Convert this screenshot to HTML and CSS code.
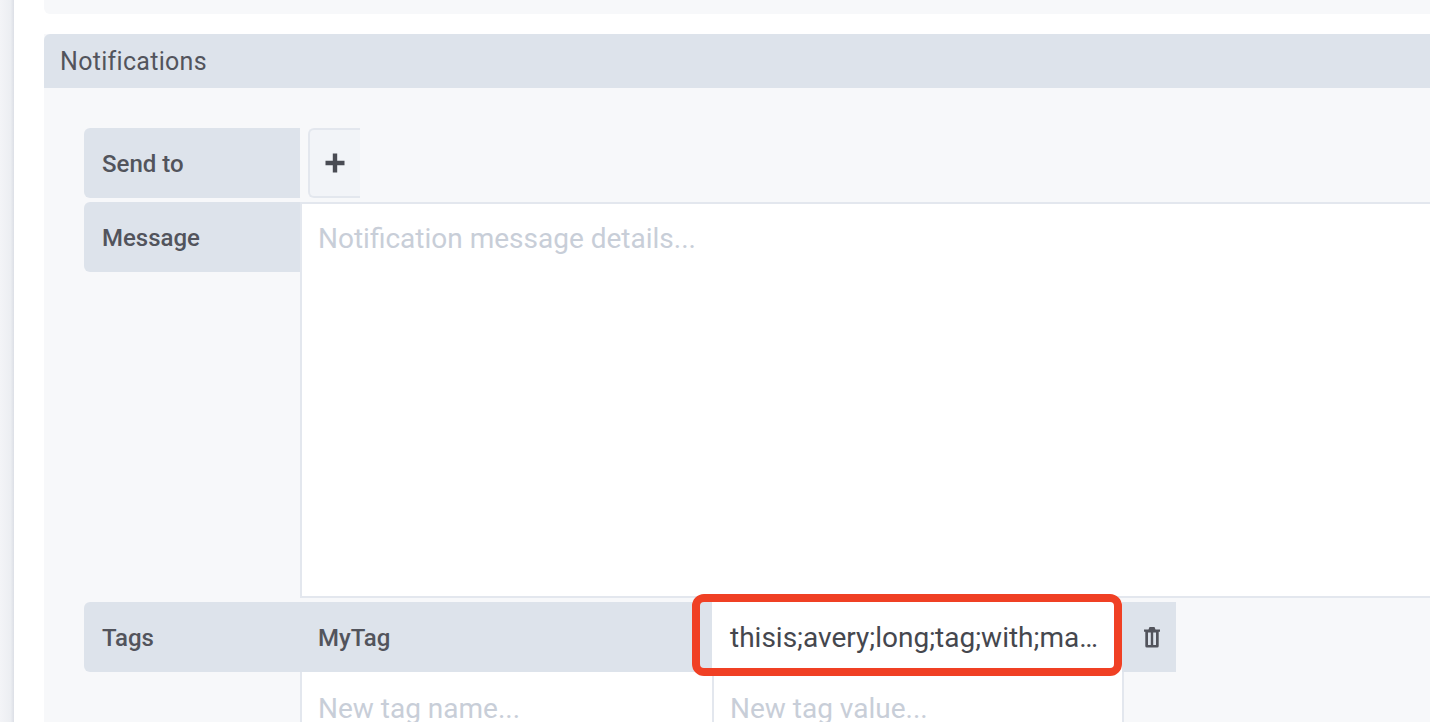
FILE: index.html
```html
<!DOCTYPE html>
<html lang="en">
<head>
<meta charset="utf-8">
<title>Notifications</title>
<link rel="stylesheet" href="styles.css">
</head>
<body>
<div class="page">
  <div class="sidebar"></div>
  <main class="main">
    <div class="top-panel"></div>
    <section class="section">
      <h2 class="section-title">Notifications</h2>
      <div class="section-body">
        <div class="field-row">
          <div class="label">Send to</div>
          <button class="add-btn" type="button" aria-label="Add">
            <svg class="plus" viewBox="0 0 20 20" width="20" height="20"><path d="M7.800 .5h4.400v7.300h7.300v4.400h-7.300v7.300H7.800v-7.300H.5V7.800h7.300z"/></svg>
          </button>
        </div>
        <div class="field-row message-row">
          <div class="label">Message</div>
          <div class="textarea placeholder">Notification message details...</div>
        </div>
        <div class="field-row tags-row">
          <div class="label">Tags</div>
          <div class="tag-table">
            <div class="tag-line">
              <div class="tag-name">MyTag</div>
              <div class="tag-value">
                <span class="tag-text">thisis;avery;long;tag;with;ma…</span>
                <div class="highlight"></div>
              </div>
              <div class="tag-delete">
                <svg viewBox="0 0 18 22" width="18" height="22"><path fill-rule="evenodd" d="M6.500 1h5l1 2.500H17v2.200h-1.300V20a1.500 1.500 0 0 1-1.500 1.500H3.800A1.500 1.500 0 0 1 2.300 20V5.700H1V3.500h4.500zM5 6.500V19h2.800V6.500zm5.200 0V19H13V6.500z"/></svg>
              </div>
            </div>
            <div class="tag-line new-line">
              <div class="tag-new placeholder">New tag name...</div>
              <div class="tag-new tag-new-value placeholder">New tag value...</div>
            </div>
          </div>
        </div>
      </div>
    </section>
  </main>
</div>
</body>
</html>
```
FILE: styles.css
```css
* { box-sizing: border-box; }
html, body { margin: 0; height: 100%; overflow: hidden; background: #fff; }
body { font-family: Roboto, "Liberation Sans", sans-serif; color: #52545c; }
.page { display: flex; height: 722px; overflow: hidden; }
.sidebar { width: 14px; flex: none; background: linear-gradient(90deg, #f3f4f7 0%, #eceef2 75%, #dcdfe6 100%); }
.main { flex: 1; min-width: 0; padding-left: 30px; }
.top-panel { height: 14px; background: #f7f8fa; border-bottom-left-radius: 6px; margin-bottom: 20px; }
.section { height: 688px; background: #f7f8fa; overflow: hidden; }
.section-title { margin: 0; height: 54px; padding-left: 16px; background: #dde3eb; border-top-left-radius: 6px; font-size: 25px; font-weight: 400; line-height: 56px; letter-spacing: 0.3px; color: #52545c; }
.section-body { padding: 40px 0 0 40px; }
.field-row { display: flex; align-items: flex-start; }
.label { width: 216px; height: 70px; flex: none; padding-left: 18px; background: #dde3eb; border-radius: 6px 0 0 6px; font-size: 24px; font-weight: 500; line-height: 72px; color: #52545c; }
.add-btn { width: 52px; height: 70px; margin-left: 8px; padding: 0; display: flex; align-items: center; justify-content: center; background: #f2f4f8; border: 2px solid #e3e7ee; border-right: 0; border-radius: 6px 0 0 6px; }
.plus { fill: #4a4c54; }
.message-row { margin-top: 4px; }
.textarea { flex: 1; height: 396px; padding-left: 16px; background: #fff; border: 2px solid #e3e7ee; border-right: 0; font-size: 28px; line-height: 70px; }
.placeholder { color: #c8ced8; }
.tags-row { margin-top: 4px; }
.tag-table { flex: 1; }
.tag-line { display: flex; height: 70px; }
.tag-name { width: 412px; height: 70px; padding-left: 18px; background: #dde3eb; font-size: 24px; font-weight: 500; line-height: 72px; color: #52545c; }
.tag-value { position: relative; width: 410px; height: 70px; padding: 0 18px; background: #fff; font-size: 28px; line-height: 72px; color: #45474e; }
.tag-text { white-space: nowrap; }
.highlight { position: absolute; left: -20px; top: -8px; width: 430px; height: 82px; border: 8px solid #f04024; border-radius: 12px; }
.tag-delete { width: 54px; height: 70px; padding-left: 6px; display: flex; align-items: center; justify-content: center; background: #dde3eb; }
.tag-delete svg { fill: #52545c; }
.tag-new { width: 412px; height: 70px; padding-left: 16px; background: #fff; border-left: 2px solid #e3e7ee; font-size: 28px; line-height: 74px; }
.tag-new-value { width: 412px; border-right: 2px solid #e3e7ee; margin-right: -2px; }
```
